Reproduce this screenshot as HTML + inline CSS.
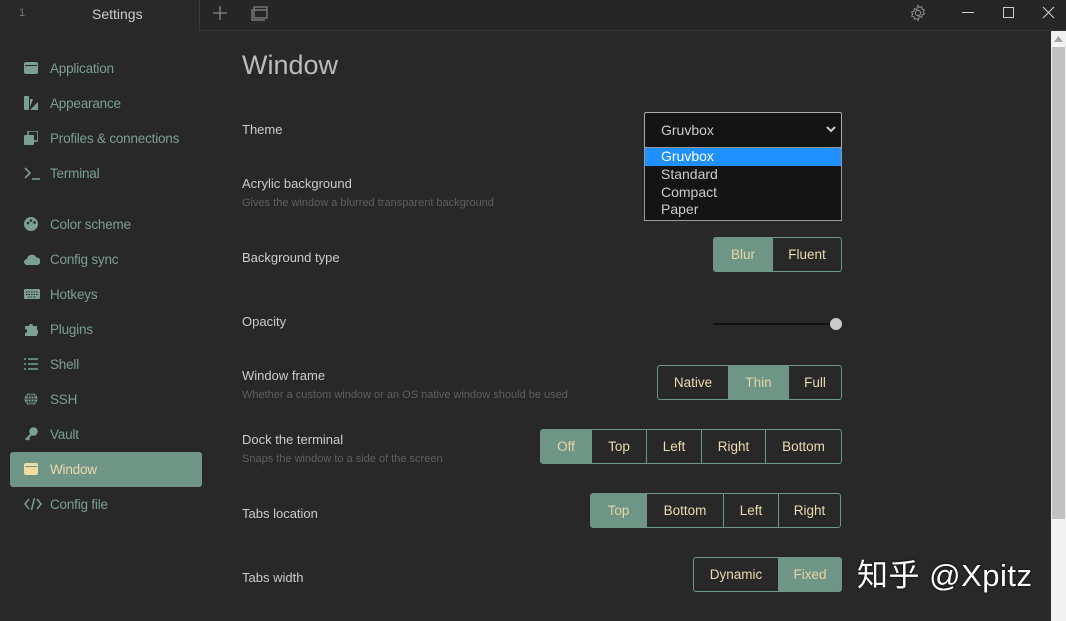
<!DOCTYPE html>
<html><head><meta charset="utf-8"><style>
*{box-sizing:border-box;margin:0;padding:0}
body{width:1066px;height:621px;background:#282828;font-family:"Liberation Sans","Noto Sans CJK SC",sans-serif;position:relative;overflow:hidden;color:#d5c4a1}
.top{position:absolute;left:0;top:0;width:1066px;height:31px;background:#262626;border-bottom:1px solid #333}
.tab{position:absolute;left:0;top:0;width:200px;height:31px;border-right:1px solid #3a3a3a;background:#282828}
.abs{position:absolute}
.side{position:absolute;left:10px;width:192px;height:35px;color:#7c9f93;font-size:13.5px;line-height:35px;padding-left:40px;letter-spacing:-0.2px}
.side svg{position:absolute;left:14px;top:10px}
.side.act{background:#6e9585;color:#ebdbb2;border-radius:3px}
.lbl{position:absolute;left:242px;font-size:13px;color:#ccc}
.sub{position:absolute;left:242px;font-size:11px;color:#5f5f5f}
.grp{position:absolute;display:flex;height:35px;border:1px solid #6e9585;border-radius:3px;overflow:hidden}
.grp div{height:33px;line-height:33px;text-align:center;font-size:13.5px;color:#ebdbb2;border-left:1px solid #6e9585}
.grp div:first-child{border-left:none}
.grp .on{background:#6e9585;color:#e5d6a8}
</style></head><body>
<div class="top"><div class="tab"><span class="abs" style="left:19px;top:7px;font-size:11px;color:#777">1</span><span class="abs" style="left:92px;top:6px;font-size:14px;color:#ccc">Settings</span></div>
<svg class="abs" style="left:212px;top:5px" width="16" height="16"><path d="M8 1v14M1 8h14" stroke="#888" stroke-width="1.3"/></svg>
<svg class="abs" style="left:251px;top:5px" width="18" height="16"><rect x="3" y="2" width="13" height="11" fill="none" stroke="#888" stroke-width="1.2"/><path d="M3 5h13M1 4v11h13" fill="none" stroke="#888" stroke-width="1.2"/></svg>
<svg class="abs" style="left:909px;top:4px" width="18" height="18" viewBox="0 0 18 18"><circle cx="9" cy="9" r="2.6" fill="none" stroke="#888" stroke-width="1.2"/><path d="M9 1.5l1.3 2 2.3-.8.4 2.4 2.3.8-1 2.1 1 2.1-2.3.8-.4 2.4-2.3-.8L9 16.5l-1.3-2-2.3.8-.4-2.4-2.3-.8 1-2.1-1-2.1 2.3-.8.4-2.4 2.3.8z" fill="none" stroke="#888" stroke-width="1.1"/></svg>
<div class="abs" style="left:962px;top:12px;width:12px;height:1px;background:#ccc"></div>
<div class="abs" style="left:1003px;top:7px;width:11px;height:11px;border:1px solid #ccc"></div>
<svg class="abs" style="left:1042px;top:6px" width="13" height="13"><path d="M1 1l11 11M12 1L1 12" stroke="#ccc" stroke-width="1.1"/></svg>
</div>
<div class="abs" style="left:1051px;top:31px;width:15px;height:590px;background:#f1f1f1"></div>
<div class="abs" style="left:1052px;top:47px;width:13px;height:472px;background:#c1c1c1"></div>
<svg class="abs" style="left:1053px;top:35px" width="11" height="8"><path d="M5.5 1L10 7H1z" fill="#a3a3a3"/></svg>

<div class="side" style="top:51px"><svg width="14" height="14"><rect x="0" y="1" width="14" height="12" rx="2" fill="#7c9f93"/><rect x="1" y="4" width="12" height="1" fill="#282828"/></svg>Application</div>
<div class="side" style="top:86px"><svg width="14" height="14"><rect x="0" y="0" width="5" height="14" rx="1" fill="#7c9f93"/><path d="M6 14L14 6v8z" fill="#7c9f93"/><path d="M6 3l3 0 -3 8z" fill="#7c9f93"/></svg>Appearance</div>
<div class="side" style="top:121px"><svg width="14" height="14"><rect x="4" y="0" width="10" height="10" rx="1" fill="none" stroke="#7c9f93" stroke-width="1.5"/><rect x="0" y="4" width="10" height="10" rx="1" fill="#7c9f93"/></svg>Profiles &amp; connections</div>
<div class="side" style="top:156px"><svg width="16" height="14"><path d="M1 2l5 5-5 5M8 13h8" fill="none" stroke="#7c9f93" stroke-width="1.6"/></svg>Terminal</div>
<div class="side" style="top:207px"><svg width="14" height="14"><circle cx="7" cy="7" r="7" fill="#7c9f93"/><circle cx="4" cy="6" r="1.3" fill="#282828"/><circle cx="7" cy="3.5" r="1.3" fill="#282828"/><circle cx="10.5" cy="5.5" r="1.3" fill="#282828"/></svg>Color scheme</div>
<div class="side" style="top:242px"><svg width="16" height="14"><path d="M3 13a3 3 0 010-6 5 5 0 019.5-1.5A3.5 3.5 0 0113 13z" fill="#7c9f93"/></svg>Config sync</div>
<div class="side" style="top:277px"><svg width="16" height="14"><rect x="0" y="2" width="16" height="10" rx="1" fill="#7c9f93"/><path d="M2 5h12M2 7.5h12M4 10h8" stroke="#282828" stroke-width="1" stroke-dasharray="1.5 1"/></svg>Hotkeys</div>
<div class="side" style="top:312px"><svg width="14" height="14"><path d="M1 4h4a2 2 0 114 0h4v4a2 2 0 110 4v2H1v-3a2 2 0 100-4z" fill="#7c9f93"/></svg>Plugins</div>
<div class="side" style="top:347px"><svg width="14" height="14"><path d="M0 2h2M0 7h2M0 12h2M4 2h10M4 7h10M4 12h10" stroke="#7c9f93" stroke-width="1.6"/></svg>Shell</div>
<div class="side" style="top:382px"><svg width="14" height="14"><circle cx="7" cy="7" r="6.3" fill="#7c9f93"/><path d="M1 7h12M7 1v12M2 4h10M2 10h10" stroke="#282828" stroke-width=".9"/><ellipse cx="7" cy="7" rx="3" ry="6.3" fill="none" stroke="#282828" stroke-width=".9"/></svg>SSH</div>
<div class="side" style="top:417px"><svg width="14" height="14"><circle cx="9.5" cy="4.5" r="4.3" fill="#7c9f93"/><path d="M7 6L1 12l1.5 1.5 1-1 1 1 1.5-1.5-1-1 3-3z" fill="#7c9f93"/></svg>Vault</div>
<div class="side act" style="top:452px"><svg width="14" height="14"><rect x="0" y="1" width="14" height="12" rx="2" fill="#f0dba0"/><rect x="1" y="4" width="12" height="1" fill="#6e9585"/></svg>Window</div>
<div class="side" style="top:487px"><svg width="18" height="14"><path d="M5 2L1 7l4 5M13 2l4 5-4 5M10.5 1l-3 12" fill="none" stroke="#7c9f93" stroke-width="1.5"/></svg>Config file</div>

<div class="abs" style="left:242px;top:50px;font-size:27px;color:#bbb">Window</div>
<div class="lbl" style="top:122px">Theme</div>
<div class="abs" style="left:644px;top:112px;width:198px;height:36px;background:#141414;border:1px solid #aaa;border-radius:2px;font-size:14px;color:#ccc;line-height:34px;padding-left:16px">Gruvbox<svg class="abs" style="left:181px;top:13px" width="10" height="8"><path d="M1 1l4 4 4-4" fill="none" stroke="#ccc" stroke-width="2"/></svg></div>
<div class="abs" style="left:644px;top:147px;width:198px;height:74px;background:#141414;border:1px solid #999;font-size:14px;color:#ccc;line-height:17.8px">
<div style="background:#1e90ff;color:#fff;padding-left:16px">Gruvbox</div><div style="padding-left:16px">Standard</div><div style="padding-left:16px">Compact</div><div style="padding-left:16px">Paper</div></div>
<div class="lbl" style="top:176px">Acrylic background</div>
<div class="sub" style="top:197px">Gives the window a blurred transparent background</div>
<div class="lbl" style="top:250px">Background type</div>
<div class="grp" style="left:713px;top:237px"><div class="on" style="width:58px">Blur</div><div style="width:69px">Fluent</div></div>
<div class="lbl" style="top:314px">Opacity</div>
<div class="abs" style="left:713px;top:323px;width:123px;height:2px;background:#111"></div>
<div class="abs" style="left:830px;top:318px;width:12px;height:12px;border-radius:50%;background:#ccc"></div>
<div class="lbl" style="top:368px">Window frame</div>
<div class="sub" style="top:389px">Whether a custom window or an OS native window should be used</div>
<div class="grp" style="left:657px;top:365px"><div style="width:70px">Native</div><div class="on" style="width:60px">Thin</div><div style="width:53px">Full</div></div>
<div class="lbl" style="top:432px">Dock the terminal</div>
<div class="sub" style="top:453px">Snaps the window to a side of the screen</div>
<div class="grp" style="left:540px;top:429px"><div class="on" style="width:50px">Off</div><div style="width:55px">Top</div><div style="width:55px">Left</div><div style="width:64px">Right</div><div style="width:76px">Bottom</div></div>
<div class="lbl" style="top:506px">Tabs location</div>
<div class="grp" style="left:590px;top:493px"><div class="on" style="width:55px">Top</div><div style="width:77px">Bottom</div><div style="width:55px">Left</div><div style="width:62px">Right</div></div>
<div class="lbl" style="top:570px">Tabs width</div>
<div class="grp" style="left:693px;top:557px"><div style="width:84px">Dynamic</div><div class="on" style="width:63px">Fixed</div></div>
<div class="abs" style="left:857px;top:550px;font-size:31px;letter-spacing:0.5px;color:#fff;text-shadow:0 0 2px #000">知乎 @Xpitz</div>
</body></html>
